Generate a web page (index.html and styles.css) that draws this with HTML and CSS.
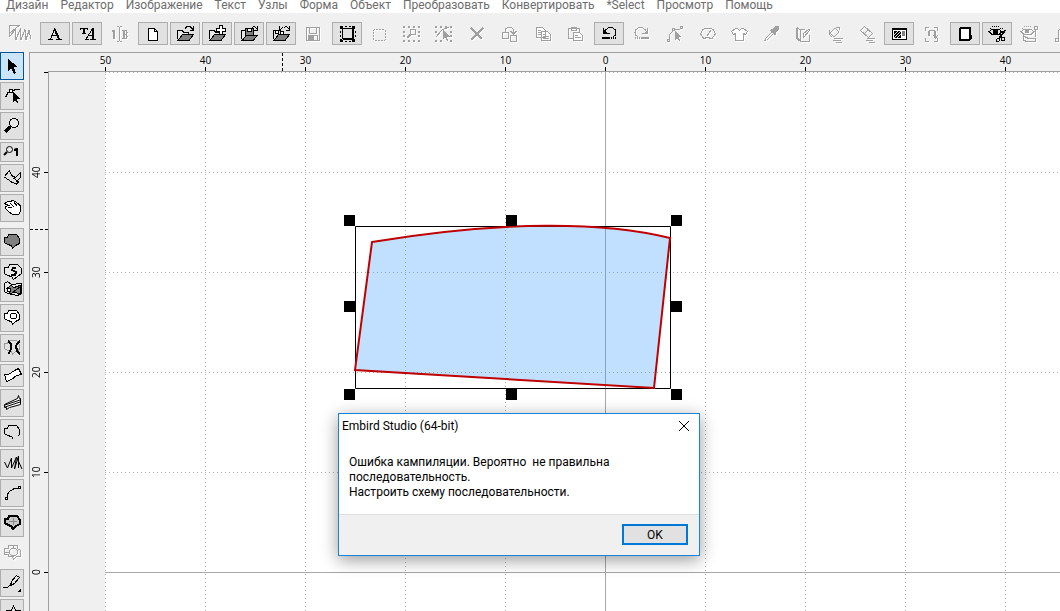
FILE: index.html
```html
<!DOCTYPE html>
<html lang="ru">
<head>
    <meta charset="UTF-8">
    <meta name="viewport" content="width=device-width, initial-scale=1.0">
    <title>Embird Studio</title>
    <link rel="stylesheet" href="styles.css">
</head>

<body>
    <div class="app">
        <nav class="menu">
            <a href="#">Дизайн</a>
            <a href="#">Редактор</a>
            <a href="#">Изображение</a>
            <a href="#">Текст</a>
            <a href="#">Узлы</a>
            <a href="#">Форма</a>
            <a href="#">Объект</a>
            <a href="#">Преобразовать</a>
            <a href="#">Конвертировать</a>
            <a href="#">*Select</a>
            <a href="#">Просмотр</a>
            <a href="#">Помощь</a>
        </nav>

        <div class="toolbar">
            <div class="group">
                <button class="btn off" aria-label="Стежки"><svg><path d="M0.5 14V2.5H10L1 10M1 13L6.5 6.5 7 16.5 11.5 5.5 12 16.5 16 6.5 17 16.5 20 7.5 22 16"/></svg></button>
                <button class="btn" aria-label="Текст"><svg><path d="M7 16.5h5M15 16.5h6M9.5 16L14 5M10.5 12.5h6"/><path stroke-width="2" d="M13.5 6L18 16"/></svg></button>
                <button class="btn" aria-label="Шрифт"><svg><path d="M7.5 7V5.5h7V7M9 10.5h4M12 16.5h4M17 16.5h6M13 16l7-11M15 12.5h5"/><path stroke-width="2" d="M11 6v4M20 5v11"/></svg></button>
                <button class="btn off" aria-label="Интервал"><svg><path stroke-width="2" d="M7 8h3M9 7v9"/><path d="M12 3.5h2M15 3.5h2M14.5 4v14M12 18.5h2M15 18.5h2"/><path d="M17 7.5h4l1 2-1 2 1 2-1 2h-4M18 11.5h3"/><path stroke-width="2" d="M19 7v9"/></svg></button>
            </div>
            <div class="group">
                <button class="btn" aria-label="Новый"><svg><path class="w" d="M9.5 5.5h6l3 3v9h-9z"/><path d="M15.5 5.5v3h3"/></svg></button>
                <button class="btn" aria-label="Открыть"><svg><path class="l" d="M6.5 16V7.5h5l1 2h5V12"/><path class="g" d="M7 17.5L11.5 11.5h11L18 17.5z"/><path d="M14 5.5l2-2h3l3 3M22.5 3v4h-4"/></svg></button>
                <button class="btn" aria-label="Добавить"><svg><path class="l" d="M6.5 16V7.5h5l1 2h5V12"/><path class="g" d="M7 17.5L11.5 11.5h11L18 17.5z"/><path class="w" d="M16.5 2.5h3v3h3v3h-3v3h-3v-3h-3v-3h3z"/></svg></button>
                <button class="btn" aria-label="Открыть файл"><svg><path class="l" d="M6.5 16V7.5h5V12"/><path class="g" d="M10.5 5.5h8v7h-8z"/><path class="w" d="M12.5 5.5h4v3h-4z"/><path class="g" d="M7 17.5L11.5 12.5h11L18 17.5z"/><path d="M17 4.5l2-1 4 3M22.5 3v4h-4"/></svg></button>
                <button class="btn" aria-label="Вставить файл"><svg><path class="l" d="M6.5 16V7.5h5V12"/><path class="g" d="M7 17.5L11.5 11.5h11L18 17.5z"/><circle class="w" cx="10" cy="9" r="2"/><circle class="w" cx="15" cy="10" r="2"/><path d="M12 3.5l2 6M16 4l-5 5M17 4.5l2-1 3 2M22.5 3v4h-4"/></svg></button>
                <button class="btn off" aria-label="Сохранить"><svg><path d="M7.5 4.5h13v13h-13zM10.5 4.5v6h7v-6M9.5 17.5v-5h9v5"/><path class="k" d="M10 13h5v4h-5z"/></svg></button>
            </div>
            <div class="group">
                <button class="btn" aria-label="Выделить все"><svg><path d="M9.5 5.5h10v10h-10zM10 16.5h10.5V6"/><path class="k" d="M7 3h3v2H9v1H7zM12 3h2v1h-2zM16 3h2v1h-2zM22 3h-3v2h1v1h2zM7 19h3v-2H9v-1H7zM12 18h2v1h-2zM16 18h2v1h-2zM22 19h-3v-2h1v-1h2zM7 8h1v2H7zM7 12h1v2H7zM22 8h1v2h-1zM22 12h1v2h-1z"/></svg></button>
                <button class="btn off" aria-label="Снять выделение"><svg><rect x="8.5" y="6.5" width="12" height="11" rx="2" stroke-dasharray="2 1"/></svg></button>
                <button class="btn off" aria-label="Масштаб выделения"><svg><path class="k" d="M6 3h2v2H6zM11 3h2v2h-2zM16 3h2v2h-2zM21 3h2v2h-2zM6 17h2v2H6zM11 17h2v2h-2zM16 17h2v2h-2zM21 17h2v2h-2zM6 8h2v2H6zM6 12h2v2H6zM21 8h2v2h-2zM21 12h2v2h-2z"/><circle cx="16" cy="9" r="3"/><path stroke-width="2" d="M14 11l-4 4"/></svg></button>
                <button class="btn off" aria-label="Узлы выделения"><svg><path class="k" d="M6 3h2v2H6zM11 3h2v2h-2zM16 3h2v2h-2zM21 3h2v2h-2zM6 17h2v2H6zM11 17h2v2h-2zM21 17h2v2h-2zM6 8h2v2H6zM21 8h2v2h-2zM21 12h2v2h-2z"/><path d="M7 14l6-7 7-3"/><path class="k" d="M14 7v9l2-2 2 4 1-1-1-3h3z"/></svg></button>
            </div>
            <div class="group">
                <button class="btn off" aria-label="Удалить"><svg><path stroke-width="2" d="M8 5l11 11M20 5L8 17"/></svg></button>
                <button class="btn off" aria-label="Дублировать"><svg><path d="M7.5 9.5h6v6h-6zM15.5 12.5h6v6h-6zM10.5 9V6l2-1.5h4l2 2V10M15.5 8l3 3 3-3"/></svg></button>
            </div>
            <div class="group">
                <button class="btn off" aria-label="Копировать"><svg><path class="w" d="M7.5 4.5h6l3 3v7h-9zM12.5 8.5h6l3 3v6h-9z"/><path d="M9 7.5h3M9 9.5h3M9 11.5h3M14 11.5h3M14 13.5h6M14 15.5h6"/></svg></button>
                <button class="btn off" aria-label="Вставить"><svg><path d="M7.5 5.5h11v10h-11zM10.5 7.5v-3h5v3z"/><path class="w" d="M12.5 9.5h6l3 3v5h-9z"/><path d="M14 12.5h3M14 14.5h6"/></svg></button>
            </div>
            <div class="group">
                <button class="btn" aria-label="Отменить"><svg><path d="M9 9.5l2-3 3-2h3l3 2 1 3-1 3-2 1M8.5 5v5.5h6"/><path class="k" d="M8 6v5h5zM7 14h8v2H7zM16 14h1v2h-1zM18 14h1v2h-1zM20 14h1v2h-1z"/></svg></button>
                <button class="btn off" aria-label="Повторить"><svg><path d="M20 9.5l-2-3-3-2h-3l-3 2-1 3 1 3 2 1M20.5 5v5.5h-6"/><path class="k" d="M21 6v5h-5zM14 14h8v2h-8zM12 14h1v2h-1zM10 14h1v2h-1zM8 14h1v2H8z"/></svg></button>
            </div>
            <div class="group">
                <button class="btn off" aria-label="Кривая"><svg><path d="M8 16l1-5 4-4 6-1M6.5 16.5h2v2h-2zM11.5 5.5h2v2h-2zM19.5 3.5h2v2h-2z"/><path class="k" d="M14 8v9l2-2 2 3 1-1-1-3h3z"/></svg></button>
                <button class="btn off" aria-label="Плотность"><svg><path d="M7.5 11l2-4 3-2h5l3 2 2 4-3 4h-3l-1-1h-2l-1 1h-2zM14 13l4-6"/></svg></button>
                <button class="btn off" aria-label="Футболка"><svg><path class="w" d="M6.5 8.5l4-3h2l2 2 2-2h2l4 3-2 3-2-1v7h-8v-7l-2 1z"/></svg></button>
                <button class="btn off" aria-label="Пипетка"><svg><path d="M7.5 18.5l1-3 7-7M9.5 17.5l7-7M7 18l2-1"/><path class="k" d="M14 6h2l2-3h3l1 1v3l-3 2v3h-2l-4-5z"/></svg></button>
                <button class="btn off" aria-label="Записать"><svg><path stroke-width="2" d="M8 5v10l3 3"/><path d="M8 4.5l3 2v12h9v-7M11 6.5h5M14 14v-3l6-5 1 1-6 7z"/></svg></button>
                <button class="btn off" aria-label="Нити"><svg><path d="M9 10l5-5 4 4-5 5zM8 7v4l3 3M15 4h3v3M13 15.5h9M12 17.5h8M15 19.5h6"/></svg></button>
                <button class="btn off" aria-label="Ластик"><svg><path d="M7.5 7.5l4-4 8 7-4 4zM11 11l4-4M14 15.5h8M13 17.5h7M16 19.5h6"/></svg></button>
                <button class="btn" aria-label="Панель"><svg><path class="w" d="M7.5 5.5h14v11h-14zM7.5 6.5h14"/><path class="k" d="M9 8h7v7H9z"/><path stroke="#ddd" d="M9 12l4-4M9 15l7-7M12 15l4-4"/><path class="g thin" d="M17 8h3v5h-3z"/></svg></button>
                <button class="btn off" aria-label="Обновить"><svg><path d="M8.5 8V4.5H12M17 4.5h3.5V8M20.5 15v3.5H17M12 18.5H8.5V15"/><path d="M11.5 13V9l2-2h3l2 2v5M16 12l2.500 3 2.500-3M12.5 13V9M17.5 9v5"/></svg></button>
            </div>
            <div class="group">
                <button class="btn" aria-label="Пяльцы"><svg><path class="k" d="M19 12h2v4h-2z"/><rect class="w" x="9" y="5" width="10" height="12" rx="1" stroke-width="2"/></svg></button>
                <button class="btn" aria-label="Скрыть"><svg><path stroke-dasharray="1 1" d="M7 5.5h2M9 3.5h8M17 5.5h3"/><path d="M6 8.5l3-2h7l3 2-3 3H9z"/><path class="k" d="M10 6h5v5h-5z"/><path d="M17.5 8v6M23 7l-6 8M22 7l-6 8"/><circle cx="15" cy="17" r="1.5"/><circle cx="20" cy="16" r="2"/></svg></button>
                <button class="btn off" aria-label="Показать"><svg><path stroke-dasharray="1 1" d="M7 5.5h2M9 3.5h8"/><path d="M6 8.5l3-2h7l3 2-3 3H9zM19.5 3.5h3v3h-3zM20.5 7v7M8.5 13v4l3 1.5h9V15h-8z"/><path class="k" d="M10 6h4v4h-4z"/></svg></button>
                <button class="btn off" aria-label="Линия"><svg><path d="M8.5 15.5h3v3h-3zM11 15V9l3-5"/></svg></button>
            </div>
        </div>

        <div class="main">
            <div class="tools">
                <button class="tool active" aria-label="Выбор"><svg><path class="k" d="M7 6v12l3-3 3 6 2-1-2-6h4z"/></svg></button>
                <button class="tool" aria-label="Правка узлов"><svg><path d="M4 13.5h1l2-4 2-1M12 7.5l3-1h4"/><path class="w" d="M8.5 6.5h3v3h-3z"/><path class="k" d="M12 9v11l2-3 2 3 1-1-1-3h3z"/></svg></button>
                <button class="tool" aria-label="Масштаб"><svg><path stroke-width="3" d="M4 19l5-5"/><circle class="l" cx="13" cy="10" r="4.5"/></svg></button>
                <button class="tool low smooth" aria-label="Масштаб 1"><svg><path stroke-width="2" d="M3 12l3-3"/><circle class="l" cx="8.5" cy="6.5" r="3"/><path class="k" d="M15 5h2v8h-2V8h-2V6z"/></svg></button>
                <button class="tool" aria-label="Лассо"><svg><path d="M3.5 11.5l5-6 2 5 4 2 5-5v5l-5 5M3.5 12l7 5 5 2 2-2-5-4"/></svg></button>
                <button class="tool" aria-label="Рука"><svg><path class="w" d="M3.5 8.5l3-2h3l2-1 3 1 2 2 2 1 1 2v5l-2 3h-6l-4-3-3-3v-2l3-1z"/><path d="M7 12l4 1M9 8l4 4M13 7l3 4"/></svg></button>
                <button class="tool split" aria-label="Заливка"><svg><path class="g" d="M3.5 8.5h3l1-3h8l3 4v5l-4 2-3 3-1-3-4-1-3-2z"/></svg></button>
                <button class="tool tall" aria-label="Параметры заливки"><svg><path class="l" d="M3.5 8.5h4l1-3h8l4 4v5l-4 3-4 3-2-3-4-1-3-2z"/><path stroke-width="2" d="M15 9h-3l-1 2 4 2-1 3h-4"/><path class="l" d="M3.5 24.5l3-2 4 3 10-1v10l-4 2-10-2-3-2z"/><path class="g" d="M6 29.5l4-3 3 2 6-2v8l-6-1-4 1z"/><circle class="w" cx="8" cy="31" r="2"/><path d="M12 33l7-5"/></svg></button>
                <button class="tool" aria-label="Отверстие"><svg><path class="w" d="M3.5 8.5h3l1-3h8l3 4v5l-4 2-3 3-1-3-4-1-3-2z"/><circle cx="12.5" cy="11" r="3"/></svg></button>
                <button class="tool" aria-label="Разрез"><svg><path stroke="#999" d="M3.5 8.5h3l1-3h8l3 4v5l-4 2-3 3-1-3-4-1-3-2z"/><path stroke-width="2" d="M7 6c5 3 4 9 0 13M19 6c-5 3-5 9 0 13"/></svg></button>
                <button class="tool mid" aria-label="Столбец"><svg><path class="w" d="M3.5 9.5h4l6-4 4-2 3 6-5 1-5 4-5 2z"/></svg></button>
                <button class="tool smooth" aria-label="Столбец с узором"><svg><path class="w" d="M3.5 14.5l13-6 1-3 1 3h1v6l-11 3-3 2v-2h-2z"/><path d="M4 15l15-5M4 17l15-5"/></svg></button>
                <button class="tool" aria-label="Контур"><svg><path d="M12.5 19.5l-2-3-4-1-3-2v-5h3l1-3h8l3 4v5l-2 2"/></svg></button>
                <button class="tool smooth" aria-label="Ручные стежки"><svg><path d="M3.5 12l3 6 4-10v10l5-11-2 12 4-13v12M16 8l5 11"/></svg></button>
                <button class="tool" aria-label="Дуга"><svg><path d="M6 17c0-5 6-9 11-9"/><path class="w" d="M4.5 17.5h2v2h-2zM17.5 6.5h2v2h-2z"/></svg></button>
                <button class="tool" aria-label="Аппликация"><svg><path class="s" stroke-width="2" d="M4 9h3l1-3h8l3 4v4l-4 2-3 3-2-3-3-1-3-2z"/><path stroke="#888" d="M8 11.5h8M12.5 8v7"/></svg></button>
                <button class="tool off" aria-label="Сетка"><svg><path d="M3.5 8.5h4v-3h9v3l3 2v6h-4l-3 3-1-3h-4v-2h-4zM3.5 12.5h4M12.5 5v3"/><circle cx="12.5" cy="12" r="4"/></svg></button>
                <button class="tool" aria-label="Карандаш"><svg><path d="M2 17.5h4l3-2"/><path class="l" d="M9.5 15.5l1-4 5-6 3 2-5 6z"/><path class="k" d="M16 22l4-4v4z"/></svg></button>
                <button class="tool" aria-label="Фигура"><svg><path d="M12.5 6l-2 4-5 1 4 4 6 0 4-4-5-1z"/></svg></button>
            </div>

            <div class="workspace">
                <div class="ruler-top">
                    <span>50</span><span>40</span><span>30</span><span>20</span><span>10</span><span>0</span><span>10</span><span>20</span><span>30</span><span>40</span>
                    <i class="mark-x"></i>
                </div>
                <div class="ruler-left">
                    <span>40</span><span>30</span><span>20</span><span>10</span><span>0</span>
                    <i class="mark-y"></i>
                </div>
                <div class="canvas">
                    <svg class="drawing">
                        <g transform="translate(-49 -72)">
                            <rect class="page" x="105" y="72" width="4000" height="3000"/>
                            <g class="dots">
                                <path d="M105 72.5H4000M105 172.5H4000M105 272.5H4000M105 372.5H4000M105 472.5H4000"/>
                                <path d="M105.5 74V3000M205.5 74V3000M305.5 74V3000M405.5 74V3000M505.5 74V3000M705.5 74V3000M805.5 74V3000M905.5 74V3000M1005.5 74V3000"/>
                            </g>
                            <path class="axis" d="M605.5 72V3000M105 572.5H4000"/>
                            <path class="box" d="M355.5 226.5h315v162h-315z"/>
                            <path class="shape" d="M372 242C505 220 605 222 670 238L654 388 355 370z"/>
                            <path class="handles" d="M344 215h11v11h-11zM506 215h11v11h-11zM671 215h11v11h-11zM344 301h11v11h-11zM671 301h11v11h-11zM344 389h11v11h-11zM506 389h11v11h-11zM671 389h11v11h-11z"/>
                        </g>
                    </svg>
                </div>
            </div>
        </div>
    </div>

    <div class="dialog" role="dialog" aria-labelledby="dialog-title">
        <div class="dialog-head">
            <span id="dialog-title">Embird Studio (64-bit)</span>
            <button class="close" aria-label="Закрыть"><svg><path d="M1 1l10 10M11 1L1 11"/></svg></button>
        </div>
        <div class="dialog-text">Ошибка кампиляции. Вероятно  не правильна
последовательность.
Настроить схему последовательности.</div>
        <div class="dialog-foot">
            <button class="ok">OK</button>
        </div>
    </div>
</body>
</html>
```

FILE: styles.css
```css
body{
    margin: 0;
    font-family: Roboto, "Open Sans", sans-serif;
    font-size: 12px;
    background-color: #f0f0f0;
    overflow: hidden;
}

button{
    font-family: inherit;
    padding: 0;
    box-sizing: border-box;
}

.app{
    display: flex;
    flex-direction: column;
    height: 100vh;
}

.menu{
    display: flex;
    align-items: flex-start;
    gap: 12px;
    height: 13px;
    padding-left: 6px;
    background-color: white;
    flex-shrink: 0;
}

    .menu > a{
        color: #6d6d6d;
        text-decoration: none;
        line-height: 10px;
        white-space: nowrap;
    }

.toolbar{
    display: flex;
    gap: 4px;
    padding: 9px 0 7px 8px;
    overflow: hidden;
    flex-shrink: 0;
}

    .group{
        display: flex;
        gap: 2px;
        flex-shrink: 0;
    }

.btn, .tool{
    display: block;
    border: 1px solid #adadad;
    background-color: #e1e1e1;
    color: black;
    flex-shrink: 0;
}

.btn{
    width: 30px;
    height: 23px;
}

.tool{
    width: 24px;
    height: 28px;
}

    .btn > svg, .tool > svg{
        display: block;
        width: 100%;
        height: 100%;
        fill: none;
        stroke: currentColor;
        shape-rendering: crispEdges;
    }

    .smooth > svg{
        shape-rendering: auto;
    }

.btn.off, .tool.off{
    border-color: transparent;
    background-color: transparent;
    color: #a0a0a0;
}

    .off > svg{
        filter: drop-shadow(1px 1px 0 white);
    }

.tool.active{
    background-color: #cce4f7;
    border-color: #005499;
}

.tool.low{
    height: 20px;
}

.tool.mid{
    height: 23px;
}

.tool.tall{
    height: 44px;
}

.tool.split{
    margin-top: 4px;
}

/* icon fills */
.w{
    fill: white;
}

.l{
    fill: #e8e8e8;
}

.g{
    fill: #808080;
}

.s{
    fill: #c8c8c8;
}

.k{
    fill: currentColor;
    stroke: none;
}

.thin{
    stroke: none;
}

.main{
    display: flex;
    gap: 5px;
    flex: 1;
    min-height: 0;
}

.tools{
    display: flex;
    flex-direction: column;
    gap: 2px;
    overflow: hidden;
}

.workspace{
    flex: 1;
    min-width: 0;
    display: grid;
    grid-template-columns: 18px 1fr;
    grid-template-rows: 18px 1fr;
    border-top: 1px solid #a0a0a0;
    border-left: 1px solid #a0a0a0;
}

.ruler-top, .ruler-left{
    position: relative;
    display: flex;
    overflow: hidden;
    font-family: "Open Sans", sans-serif;
    font-size: 10px;
    line-height: 14px;
}

.ruler-top{
    grid-column: 1 / 3;
    padding-left: 25px;
}

    .ruler-top > span{
        width: 101px;
        margin-right: -1px;
        flex-shrink: 0;
        text-align: center;
        background: linear-gradient(black, black) center bottom / 1px 4px no-repeat;
    }

.ruler-left{
    flex-direction: column;
    padding-top: 51px;
    background: linear-gradient(black, black) right 1px / 4px 1px no-repeat;
    background-position: right 1px;
}

    .ruler-left > span{
        height: 101px;
        margin-bottom: -1px;
        flex-shrink: 0;
        writing-mode: vertical-rl;
        transform: rotate(180deg);
        text-align: center;
        line-height: 12px;
        padding-left: 6px;
        background: linear-gradient(black, black) left center / 4px 1px no-repeat;
    }

/* cursor position on the rulers */
.mark-x{
    position: absolute;
    left: 252px;
    top: 0;
    height: 18px;
    border-left: 1px dashed black;
}

.mark-y{
    position: absolute;
    top: 158px;
    left: 0;
    width: 18px;
    border-top: 1px dashed black;
}

.canvas{
    border-top: 1px solid #a0a0a0;
    border-left: 1px solid #a0a0a0;
    min-width: 0;
    min-height: 0;
    overflow: hidden;
}

.drawing{
    display: block;
    width: 100%;
    height: 100%;
}

    .page{
        fill: white;
    }

    .dots{
        stroke: #b0b0b0;
        stroke-dasharray: 1 3;
        fill: none;
    }

    .axis{
        stroke: #a8a8a8;
        fill: none;
    }

    .box{
        stroke: black;
        fill: none;
    }

    .shape{
        fill: rgba(51, 153, 255, 0.3);
        stroke: #c00000;
        stroke-width: 2;
    }

    .handles{
        fill: black;
    }

.dialog{
    position: absolute;
    left: 338px;
    top: 413px;
    width: 360px;
    border: 1px solid #1883d7;
    background-color: white;
    box-shadow: 0 4px 16px rgba(0, 0, 0, 0.4);
    color: black;
}

.dialog-head{
    display: flex;
    justify-content: space-between;
    align-items: center;
    height: 24px;
    padding: 0 9px 0 3px;
}

.close{
    border: none;
    background: none;
}

    .close > svg{
        display: block;
        width: 12px;
        height: 12px;
        stroke: black;
        stroke-width: 1;
    }

.dialog-text{
    padding: 17px 10px 14px;
    line-height: 15px;
    white-space: pre;
}

.dialog-foot{
    display: flex;
    justify-content: flex-end;
    padding: 9px 11px 10px;
    background-color: #f0f0f0;
    border-top: 1px solid #dfdfdf;
}

.ok{
    width: 66px;
    height: 21px;
    border: 2px solid #0078d7;
    background-color: #e1e1e1;
    color: black;
    font-size: 12px;
    line-height: 16px;
}
```
